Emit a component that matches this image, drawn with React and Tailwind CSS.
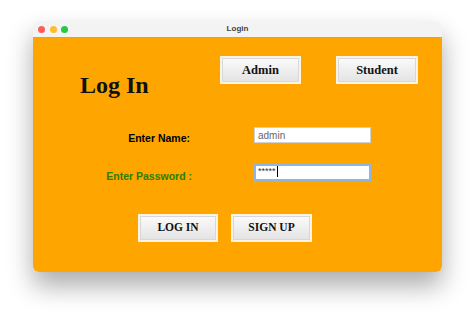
import React from 'react';

const serif = { fontFamily: '"Liberation Serif", "Times New Roman", serif' };
const sans = { fontFamily: '"Liberation Sans", Arial, sans-serif' };

// Swing-style bevelled button
const SwingButton = ({ label, className }) => (
  <button
    className={`h-[28px] border-2 border-[#fbf3e4] bg-gradient-to-b from-[#fbfbfb] to-[#e3e3e3] font-bold text-[#111] shadow-[inset_0_0_0_1px_#d8d8d8] ${className}`}
    style={serif}
  >
    {label}
  </button>
);

export default function App() {
  return (
    <div className="h-[315px] w-[474px] bg-white pl-[33px] pt-[21px]">
      <div className="w-[409px] overflow-hidden rounded-[6px] shadow-[0_14px_26px_rgba(0,0,0,0.33)]">
        {/* title bar */}
        <div className="relative flex h-[17px] items-center border-b border-[#d9a23a] bg-[#f3f3f3] px-[5px]">
          <div className="flex gap-[4.5px]">
            <span className="h-[7px] w-[7px] rounded-full bg-[#ff5f57]" />
            <span className="h-[7px] w-[7px] rounded-full bg-[#febc2e]" />
            <span className="h-[7px] w-[7px] rounded-full bg-[#28c840]" />
          </div>
          <span
            className="absolute left-0 right-0 text-center text-[8px] font-bold text-[#444]"
            style={sans}
          >
            Login
          </span>
        </div>

        {/* content */}
        <div className="h-[234px] bg-[#ffa500] pt-[18px]">
          <div className="flex h-[28px] items-start pl-[47px]">
            <h1 className="mt-[17px] w-[140px] text-[24px] font-bold leading-none text-[#111]" style={serif}>
              Log In
            </h1>
            <SwingButton label="Admin" className="w-[81px] text-[12.5px]" />
            <SwingButton label="Student" className="ml-[35px] w-[82px] text-[12.5px]" />
          </div>

          <div className="mt-[43px] grid grid-cols-[159px_117px] gap-x-[62px] gap-y-[21px]">
            <label className="flex items-end justify-end pr-[2px] text-[10.5px] font-bold leading-none text-black" style={sans}>
              Enter Name:
            </label>
            <div className="flex h-[16px] items-center border border-[#d0d0d0] bg-white px-[3px] text-[10px] text-[#666]" style={sans}>
              admin
            </div>
            <label className="flex items-end justify-end text-[10.5px] font-bold leading-none text-[#2f7d00]" style={sans}>
              Enter Password :
            </label>
            <div className="flex h-[17px] items-start border-2 border-[#8fb5e3] bg-white px-[2px] text-[9px] leading-[10px] text-[#333]" style={sans}>
              *****
              <span className="ml-[1px] h-[11px] w-px bg-black" />
            </div>
          </div>

          <div className="mt-[33px] flex pl-[105px]">
            <SwingButton label="LOG IN" className="w-[80px] text-[11.5px]" />
            <SwingButton label="SIGN UP" className="ml-[13px] w-[81px] text-[11.5px]" />
          </div>
        </div>
      </div>
    </div>
  );
}
